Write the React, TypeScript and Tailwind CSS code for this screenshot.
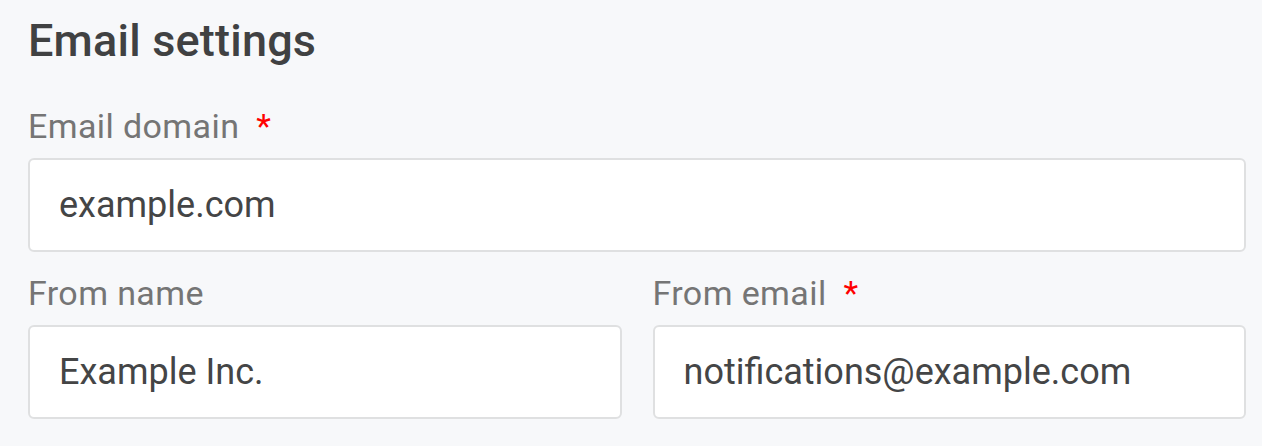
import React from "react";

function Field({ label, value, required }: { label: string; value: string; required?: boolean }) {
  return (
    <div className="flex flex-col min-w-0">
      <div className="text-[34px] leading-[40px] tracking-[0.4px] text-[#757575] whitespace-nowrap">
        {label}
        {required && <span className="ml-[17px] text-[#ff0000]">*</span>}
      </div>
      <div className="mt-[12px] h-[94px] rounded-[6px] border-2 border-[#dfe0e1] bg-white flex items-center px-[29px] text-[36px] text-[#444546] whitespace-nowrap overflow-hidden">
        {value}
      </div>
    </div>
  );
}

export default function App() {
  return (
    <div
      className="w-full h-[446px] bg-[#f7f8fa] pl-[28px] pr-[16px] pt-[16px]"
      style={{ fontFamily: "Roboto, 'Noto Sans', sans-serif" }}
    >
      <h2 className="text-[45px] leading-[50px] tracking-[0.2px] font-medium text-[#404142]">Email settings</h2>
      <div className="mt-[40px]">
        <Field label="Email domain" value="example.com" required />
      </div>
      <div className="mt-[21px] grid grid-cols-2 gap-[31px]">
        <Field label="From name" value="Example Inc." />
        <Field label="From email" value="notifications@example.com" required />
      </div>
    </div>
  );
}
